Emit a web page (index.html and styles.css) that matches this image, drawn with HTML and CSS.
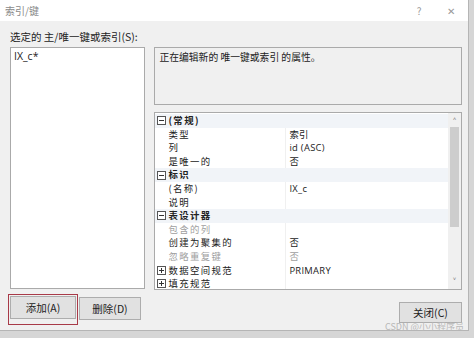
FILE: index.html
```html
<!DOCTYPE html>
<html lang="zh-CN">
<head>
    <meta charset="UTF-8">
    <title>索引/键</title>
    <link rel="stylesheet" href="styles.css">
</head>
<body>
    <div class="window">
        <div class="titlebar">
            <span class="title">索引/键</span>
            <span class="tb-btn help">?</span>
            <span class="tb-btn close">&#x2715;</span>
        </div>
        <div class="content">
            <div class="label">选定的 主/唯一键或索引(S):</div>
            <div class="main">
                <div class="listbox">
                    <div class="item">IX_c*</div>
                </div>
                <div class="right">
                    <div class="desc">正在编辑新的 唯一键或索引 的属性。</div>
                    <div class="grid">
                        <div class="rows">
                            <div class="row cat"><span class="gut"><i class="box minus"></i></span><span class="name">(常规)</span><span class="val"></span></div>
                            <div class="row"><span class="gut"></span><span class="name">类型</span><span class="val">索引</span></div>
                            <div class="row"><span class="gut"></span><span class="name">列</span><span class="val">id (ASC)</span></div>
                            <div class="row"><span class="gut"></span><span class="name">是唯一的</span><span class="val">否</span></div>
                            <div class="row cat"><span class="gut"><i class="box minus"></i></span><span class="name">标识</span><span class="val"></span></div>
                            <div class="row"><span class="gut"></span><span class="name">(名称)</span><span class="val">IX_c</span></div>
                            <div class="row"><span class="gut"></span><span class="name">说明</span><span class="val"></span></div>
                            <div class="row cat"><span class="gut"><i class="box minus"></i></span><span class="name">表设计器</span><span class="val"></span></div>
                            <div class="row dim"><span class="gut"></span><span class="name">包含的列</span><span class="val"></span></div>
                            <div class="row"><span class="gut"></span><span class="name">创建为聚集的</span><span class="val">否</span></div>
                            <div class="row dim"><span class="gut"></span><span class="name">忽略重复键</span><span class="val">否</span></div>
                            <div class="row"><span class="gut"><i class="box plus"></i></span><span class="name">数据空间规范</span><span class="val">PRIMARY</span></div>
                            <div class="row"><span class="gut"><i class="box plus"></i></span><span class="name">填充规范</span><span class="val"></span></div>
                        </div>
                        <div class="scrollbar">
                            <span class="arrow">&#x2C4;</span>
                            <div class="thumb"></div>
                            <span class="arrow down">&#x2C5;</span>
                        </div>
                    </div>
                </div>
            </div>
            <div class="footer">
                <div class="left-btns">
                    <div class="focus"><button class="btn">添加(A)</button></div>
                    <button class="btn">删除(D)</button>
                </div>
                <button class="btn close-btn">关闭(C)</button>
            </div>
        </div>
        <div class="watermark">CSDN @小小程序员</div>
    </div>
</body>
</html>
```

FILE: styles.css
```css
body {
    margin: 0;
    background: #d6d6d6;
    font-family: "Noto Sans CJK SC", "Noto Sans", sans-serif;
    font-size: 11px;
    color: #222;
}
.window {
    position: relative;
    width: 469px;
    height: 331px;
    background: #f0f0f0;
    border-right: 1px solid #b5b5b5;
    border-bottom: 1px solid #b5b5b5;
    box-sizing: border-box;
}
.titlebar {
    height: 21px;
    background: #fff;
    display: flex;
    align-items: center;
    padding-left: 5px;
}
.title {
    color: #8a8a8a;
    font-size: 10px;
    flex: 1;
}
.tb-btn {
    color: #999;
    width: 32px;
    text-align: center;
    font-size: 10px;
}
.close {
    margin-right: 1px;
}
.content {
    padding: 9px 6px 0 10px;
}
.label {
    height: 17px;
    line-height: 14px;
    font-size: 10.5px;
}
.main {
    display: flex;
    gap: 9px;
}
.listbox {
    width: 136px;
    height: 242px;
    background: #fff;
    border: 1px solid #aaa;
    box-sizing: border-box;
    padding: 2px 3px;
}
.item {
    font-family: "Open Sans", "Noto Sans", sans-serif;
    font-size: 10.5px;
    line-height: 13px;
}
.right {
    width: 309px;
    display: flex;
    flex-direction: column;
    gap: 7px;
}
.desc {
    height: 58px;
    border: 1px solid #aaa;
    box-sizing: border-box;
    padding: 2px 4px;
    font-size: 9.8px;
    line-height: 14px;
}
.grid {
    height: 178px;
    border: 1px solid #aaa;
    box-sizing: border-box;
    background: #fff;
    display: flex;
    overflow: hidden;
}
.rows {
    flex: 1;
    padding-top: 1px;
}
.row {
    display: flex;
    height: 13.6px;
    line-height: 13.6px;
    font-size: 9.4px;
    letter-spacing: 1.4px;
}
.gut {
    width: 12px;
    display: flex;
    align-items: center;
    justify-content: center;
}
.name {
    width: 117px;
    padding-left: 1px;
    border-right: 1px solid #f0f0f0;
}
.val {
    flex: 1;
    padding-left: 3px;
    font-family: "Open Sans", "Noto Sans CJK SC", sans-serif;
    letter-spacing: 0.3px;
}
.cat {
    background: #f1f4f8;
    font-weight: bold;
}
.cat .name {
    border-right: none;
}
.dim {
    color: #a0a0a0;
}
.box {
    position: relative;
    width: 7px;
    height: 7px;
    border: 1px solid #555;
    box-sizing: content-box;
    background: #fff;
}
.box::before {
    content: '';
    position: absolute;
    left: 1px;
    top: 3px;
    width: 5px;
    height: 1px;
    background: #333;
}
.plus::after {
    content: '';
    position: absolute;
    left: 3px;
    top: 1px;
    width: 1px;
    height: 5px;
    background: #333;
}
.scrollbar {
    width: 13px;
    background: #f0f0f0;
    display: flex;
    flex-direction: column;
    align-items: center;
}
.arrow {
    height: 14px;
    line-height: 16px;
    font-size: 11px;
    color: #606060;
}
.arrow.down {
    margin-top: auto;
    line-height: 12px;
}
.thumb {
    width: 9px;
    height: 100px;
    background: #cdcdcd;
}
.footer {
    display: flex;
    justify-content: space-between;
    align-items: flex-start;
    margin-top: 4px;
}
.left-btns {
    display: flex;
    align-items: flex-start;
    gap: 1px;
    margin-left: -2px;
}
.focus {
    border: 1.5px solid #a83a48;
    padding: 1px 1px 5px 1px;
}
.btn {
    height: 23px;
    padding: 0;
    border: 1px solid #adadad;
    background: #e1e1e1;
    font-family: "Noto Sans CJK SC", sans-serif;
    font-size: 10.5px;
    color: #222;
    width: 66px;
}
.left-btns > .btn {
    margin-top: 3px;
    width: 62px;
}
.close-btn {
    width: 63px;
    height: 21px;
    margin-top: 8px;
}
.watermark {
    position: absolute;
    right: 4px;
    bottom: -3px;
    font-size: 9px;
    color: #b8b8b8;
}
```
